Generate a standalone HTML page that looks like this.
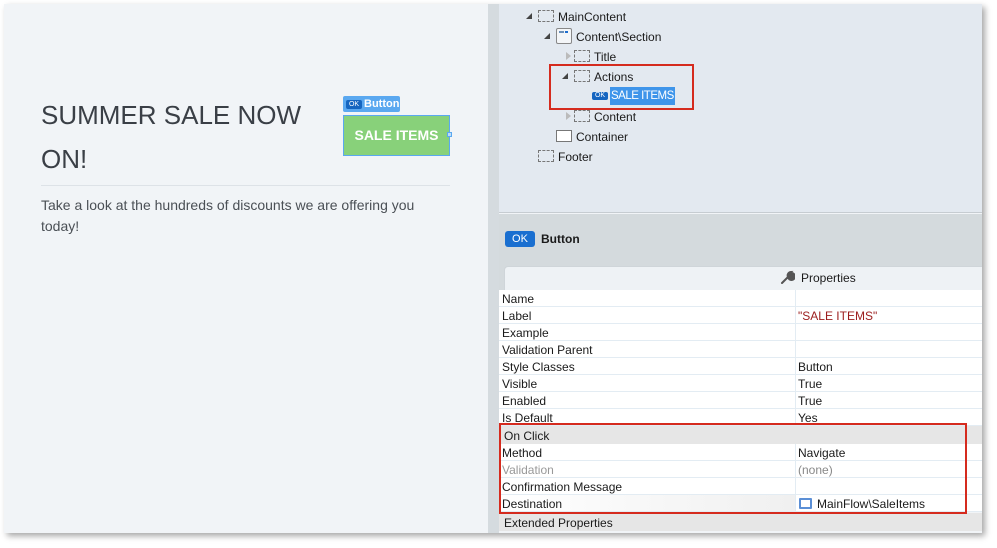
<!DOCTYPE html>
<html><head><meta charset="utf-8"><style>
*{margin:0;padding:0;box-sizing:border-box}
body{width:997px;height:548px;background:#fff;font-family:"Segoe UI","Liberation Sans",sans-serif;position:relative;overflow:hidden;font-size:12px;color:#1a1a1a}
.a{position:absolute}
.frame{left:4px;top:4px;width:978px;height:529px;box-shadow:3px 3px 6px rgba(0,0,0,.35);background:#f1f4f7}
.dash{position:absolute;width:16px;height:12px;border:1px dashed #777}
.tri{position:absolute;width:0;height:0;border-left:6px solid transparent;border-bottom:6px solid #444}
.tr2{position:absolute;width:0;height:0;border-top:4px solid transparent;border-bottom:4px solid transparent;border-left:5px solid #bbb}
.t{position:absolute;font-size:12px;line-height:16px;white-space:nowrap}
.row{position:absolute;left:499px;width:483px;height:17px;background:#fff;border-bottom:1px solid #e3ecf3}
.row span{position:absolute;top:1px;line-height:16px;font-size:12px;white-space:nowrap}
.row .k{left:3px}.row .v{left:299px}
.row:after{content:"";position:absolute;left:296px;top:0;width:1px;height:17px;background:#e3ecf3}
</style></head><body>
<div class="a frame"></div>
<!-- left -->
<div class="a" style="left:41px;top:93px;font-size:26px;line-height:44px;color:#3a3f46">SUMMER SALE NOW<br>ON!</div>
<div class="a" style="left:41px;top:185px;width:409px;height:1px;background:#dde2e7"></div>
<div class="a" style="left:41px;top:195px;font-size:14px;line-height:21px;color:#4a4f55">Take a look at the hundreds of discounts we are offering you<br>today!</div>
<div class="a" style="left:343px;top:96px;width:57px;height:16px;background:#5aa8f0;border-radius:2px"></div>
<div class="a" style="left:346px;top:100px;width:16px;height:9px;background:#1565c0;border-radius:2px;color:#fff;font-size:7px;line-height:9px;text-align:center">OK</div>
<div class="a" style="left:364px;top:97px;font-size:11px;line-height:14px;color:#fff;font-weight:bold">Button</div>
<div class="a" style="left:343px;top:115px;width:107px;height:41px;background:#88d17a;border:1px solid #5aa8f0;color:#fff;font-weight:bold;font-size:14px;line-height:39px;text-align:center;white-space:nowrap">SALE ITEMS</div>
<div class="a" style="left:447px;top:132px;width:5px;height:5px;background:#bcdcfa;border:1px solid #5aa8f0"></div>
<!-- divider -->
<div class="a" style="left:488px;top:4px;width:11px;height:529px;background:#d5dbdf"></div>
<!-- tree -->
<div class="a" style="left:499px;top:4px;width:483px;height:209px;background:#e3e9f0;border-bottom:1px solid #c6ccd1"></div>
<div class="tri" style="left:526px;top:13px"></div><div class="dash" style="left:538px;top:10px"></div><div class="t" style="left:558px;top:9px">MainContent</div>
<div class="tri" style="left:544px;top:33px"></div><div class="a" style="left:556px;top:28px;width:16px;height:16px;border:1px solid #888;background:#f4f6f8;border-radius:2px"><div style="position:absolute;left:2px;top:2px;width:5px;height:2px;background:#6a8fb8"></div><div style="position:absolute;left:8px;top:2px;width:3px;height:2px;background:#1e6fd0"></div></div><div class="t" style="left:576px;top:29px">Content\Section</div>
<div class="tr2" style="left:566px;top:52px"></div><div class="dash" style="left:574px;top:50px"></div><div class="t" style="left:594px;top:49px">Title</div>
<div class="tri" style="left:562px;top:73px"></div><div class="dash" style="left:574px;top:70px"></div><div class="t" style="left:594px;top:69px">Actions</div>
<div class="a" style="left:592px;top:92px;width:16px;height:8px;background:#1565c0;border-radius:2px;color:#fff;font-size:7px;line-height:8px;text-align:center">OK</div>
<div class="a" style="left:610px;top:87px;width:65px;height:18px;background:#3f95ea;color:#fff;font-size:11.5px;line-height:18px;padding-left:1px;white-space:nowrap;overflow:hidden;letter-spacing:-0.5px">SALE ITEMS</div>
<div class="tr2" style="left:566px;top:112px"></div><div class="dash" style="left:574px;top:110px"></div><div class="t" style="left:594px;top:109px">Content</div>
<div class="a" style="left:556px;top:130px;width:16px;height:12px;border:1px solid #777;background:#fff"></div><div class="t" style="left:576px;top:129px">Container</div>
<div class="dash" style="left:538px;top:150px"></div><div class="t" style="left:558px;top:149px">Footer</div>
<div class="a" style="left:549px;top:64px;width:145px;height:46px;border:2px solid #d52b1e"></div>
<!-- header -->
<div class="a" style="left:499px;top:214px;width:483px;height:76px;background:#d4dadd"></div>
<div class="a" style="left:505px;top:231px;width:30px;height:16px;background:#1a6fd0;border-radius:3px;color:#fff;font-size:11px;line-height:16px;text-align:center">OK</div>
<div class="a" style="left:541px;top:230px;font-weight:bold;font-size:12px;line-height:18px">Button</div>
<div class="a" style="left:504px;top:266px;width:478px;height:24px;background:#eef2f5;border-radius:4px 0 0 0;border-left:1px solid #cfd5d9;border-top:1px solid #cfd5d9"></div>
<svg class="a" style="left:780px;top:270px" width="15" height="15" viewBox="0 0 15 15"><path d="M2 13 L8 7 M8 7 A3.5 3.5 0 1 0 12 3 L10 5 L9 4 L11 2 A3.5 3.5 0 0 0 8 7" stroke="#555" stroke-width="2" fill="#555" stroke-linecap="round"/></svg>
<div class="t" style="left:801px;top:270px">Properties</div>
<!-- rows -->
<div class="row" style="top:290px"><span class="k">Name</span></div>
<div class="row" style="top:307px"><span class="k">Label</span><span class="v" style="color:#9b1c1c">"SALE ITEMS"</span></div>
<div class="row" style="top:324px"><span class="k">Example</span></div>
<div class="row" style="top:341px"><span class="k">Validation Parent</span></div>
<div class="row" style="top:358px"><span class="k">Style Classes</span><span class="v">Button</span></div>
<div class="row" style="top:375px"><span class="k">Visible</span><span class="v">True</span></div>
<div class="row" style="top:392px"><span class="k">Enabled</span><span class="v">True</span></div>
<div class="row" style="top:409px"><span class="k">Is Default</span><span class="v">Yes</span></div>
<div class="a" style="left:499px;top:426px;width:483px;height:18px;background:#e6e6e6"><span style="position:absolute;left:5px;top:2px;line-height:16px">On Click</span></div>
<div class="row" style="top:444px"><span class="k">Method</span><span class="v">Navigate</span></div>
<div class="row" style="top:461px"><span class="k" style="color:#999">Validation</span><span class="v" style="color:#888">(none)</span></div>
<div class="row" style="top:478px"><span class="k">Confirmation Message</span></div>
<div class="row" style="top:495px;background:linear-gradient(90deg,#fff 0,#f0f0f0 296px,#fff 296px)"><span class="k">Destination</span><span class="a" style="left:300px;top:3px;width:13px;height:11px;border:2px solid #5b8fd6;border-radius:1px"></span><span class="v" style="left:318px">MainFlow\SaleItems</span></div>
<div class="a" style="left:499px;top:513px;width:483px;height:18px;background:#e6e6e6"><span style="position:absolute;left:5px;top:2px;line-height:16px">Extended Properties</span></div>
<div class="a" style="left:499px;top:423px;width:468px;height:91px;border:2px solid #d52b1e"></div>
</body></html>
